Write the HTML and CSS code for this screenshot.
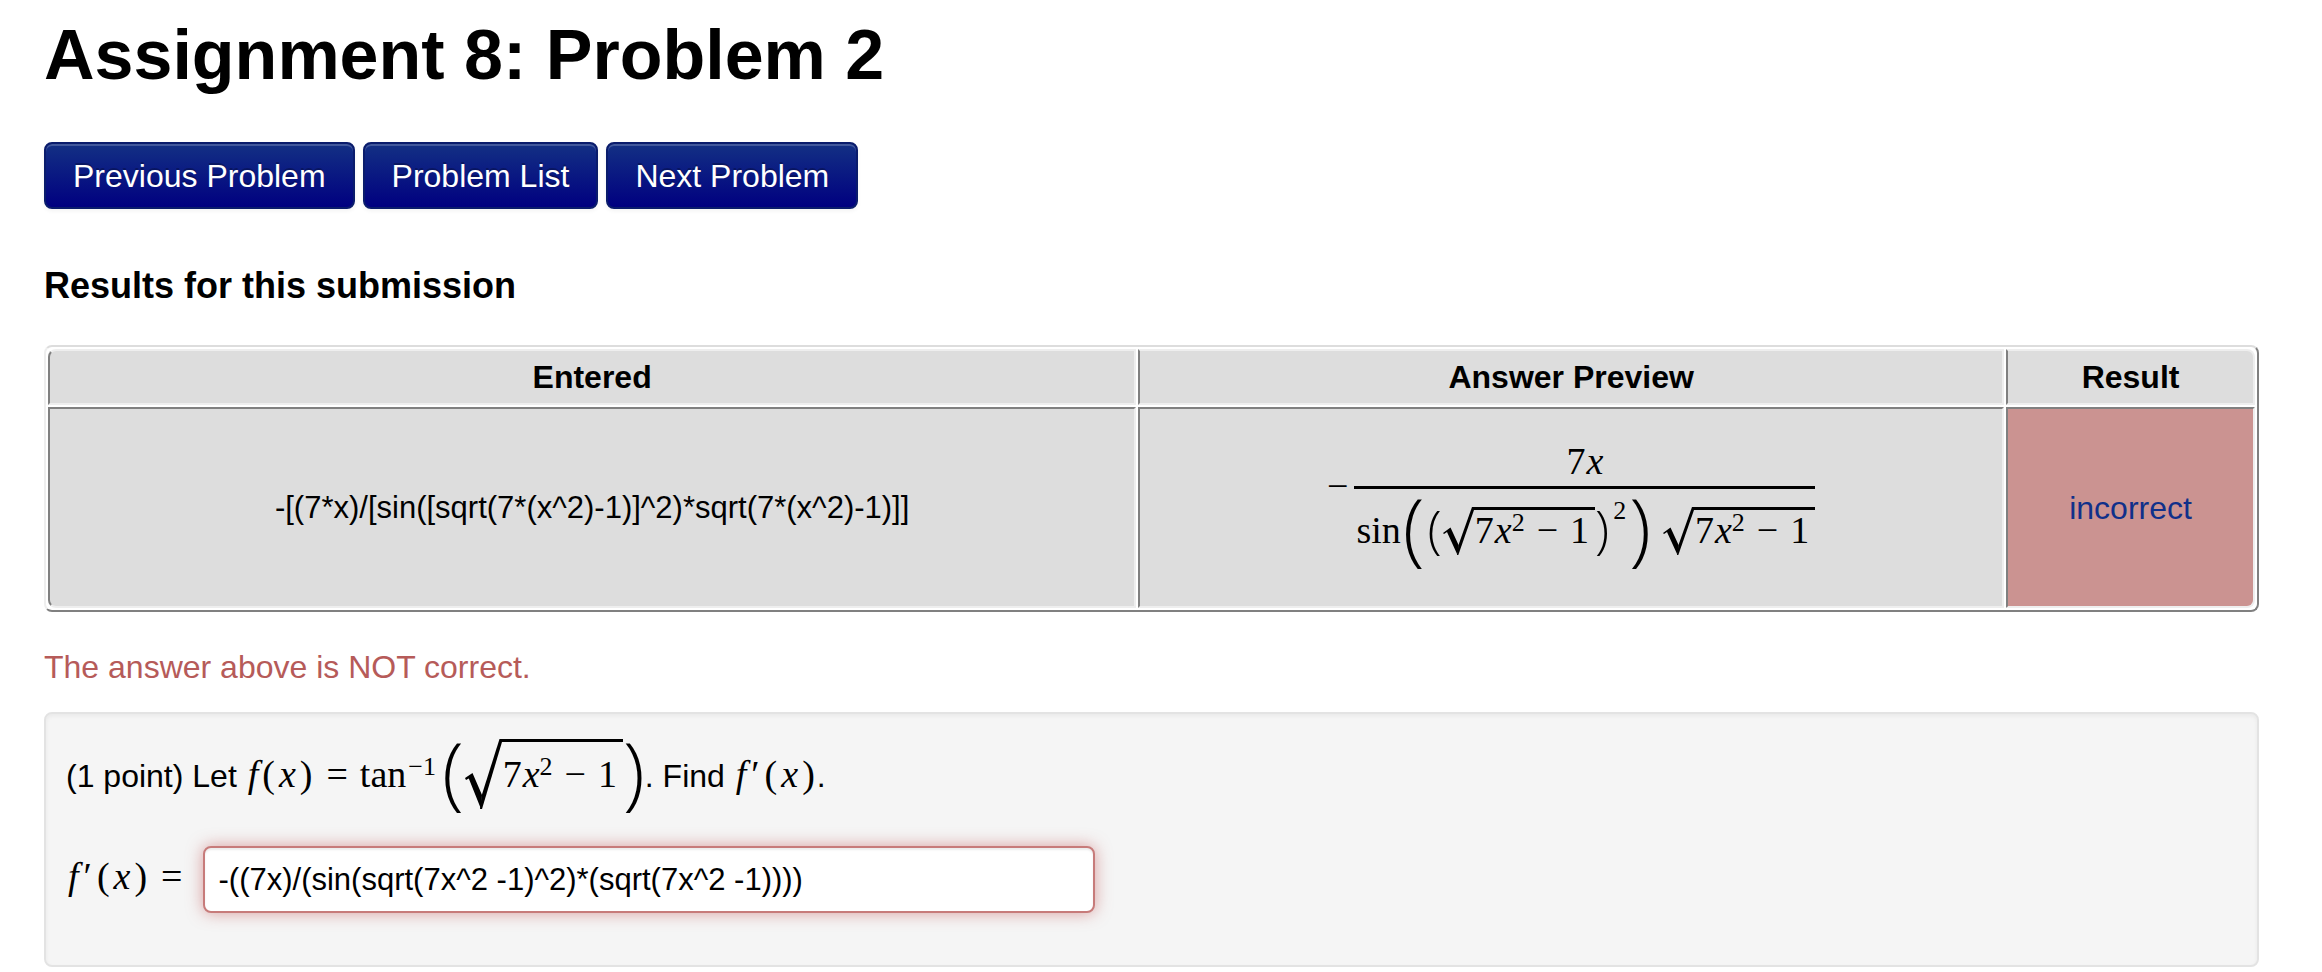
FILE: index.html
```html
<!DOCTYPE html>
<html lang="en">
<head>
<meta charset="utf-8">
<meta name="viewport" content="width=device-width, initial-scale=1">
<title>Assignment 8: Problem 2</title>
<link rel="stylesheet" href="styles.css">
</head>
<body>
<main class="page">
  <h1 class="title">Assignment 8: Problem 2</h1>
  <nav class="nav">
    <a class="btn" href="#previous">Previous Problem</a>
    <a class="btn" href="#list">Problem List</a>
    <a class="btn" href="#next">Next Problem</a>
  </nav>

  <h3 class="subtitle">Results for this submission</h3>
  <table class="results">
    <colgroup><col class="col-entered"><col class="col-preview"><col class="col-result"></colgroup>
    <thead>
      <tr><th scope="col">Entered</th><th scope="col">Answer Preview</th><th scope="col">Result</th></tr>
    </thead>
    <tbody>
      <tr>
        <td class="entered">-[(7*x)/[sin([sqrt(7*(x^2)-1)]^2)*sqrt(7*(x^2)-1)]]</td>
        <td>
          <span class="math equation">
            <span class="lead-minus">−</span>
            <span class="frac">
              <span class="num">7<i class="var">x</i></span>
              <span class="den"><span class="fn">sin</span><span class="paren paren-lg open">(</span><span class="paren paren-md open">(</span><span class="root"><svg class="radical" viewBox="0 0 31 48" aria-hidden="true"><path d="M0 26L7.500 20.500L15.800 38.500L14.500 48L4 25L1 27Z"/><path d="M14 48L15.500 38L29 0H31V3L15.300 48Z"/></svg><span class="radicand">7<i class="var">x</i><span class="sup">2</span><span class="op">−</span>1</span></span><span class="paren paren-md">)</span><span class="sup sup-high">2</span><span class="paren paren-lg close">)</span><span class="root root-spaced"><svg class="radical" viewBox="0 0 31 48" aria-hidden="true"><path d="M0 26L7.500 20.500L15.800 38.500L14.500 48L4 25L1 27Z"/><path d="M14 48L15.500 38L29 0H31V3L15.300 48Z"/></svg><span class="radicand">7<i class="var">x</i><span class="sup">2</span><span class="op">−</span>1</span></span></span>
            </span>
          </span>
        </td>
        <td class="wrong"><a class="result-link" href="#answer">incorrect</a></td>
      </tr>
    </tbody>
  </table>

  <p class="message">The answer above is NOT correct.</p>

  <section class="problem">
    <p class="statement">(1 point) Let <span class="math"><i class="func">f</i><span class="arg">(<i class="var">x</i>)</span><span class="op">=</span><span class="fn">tan</span><span class="sup sup-inverse">−1</span><span class="paren paren-lg open">(</span><span class="root root-tall"><svg class="radical" viewBox="0 0 37 70" aria-hidden="true"><path d="M0 39L7.500 34L17 56L16 70L3.800 39.500L1 41Z"/><path d="M15 70L16.800 56L34.500 0H37V3L17 70Z"/></svg><span class="radicand">7<i class="var">x</i><span class="sup">2</span><span class="op">−</span>1</span></span><span class="paren paren-lg">)</span></span>. Find <span class="math"><i class="func">f</i><span class="prime">′</span><span class="arg">(<i class="var">x</i>)</span></span>.</p>
    <div class="answer-row">
      <label class="math answer-label" for="answer"><i class="func">f</i><span class="prime">′</span><span class="arg">(<i class="var">x</i>)</span><span class="op">=</span></label>
      <input class="answer" id="answer" type="text" value="-((7x)/(sin(sqrt(7x^2 -1)^2)*(sqrt(7x^2 -1))))">
    </div>
  </section>
</main>
</body>
</html>
```
FILE: styles.css
```css
* { box-sizing: border-box; }

body {
  margin: 0;
  background: #fff;
  color: #000;
  font: 32px/40px "Liberation Sans", Arial, sans-serif;
}

.page { padding: 15px 63px 4px 44px; }

.title {
  margin: 0 0 47px;
  font-size: 70px;
  line-height: 80px;
}

.nav { display: flex; gap: 8px; }

.btn {
  padding: 12px 27px 11px;
  border: 2px solid #0a1c6c;
  border-radius: 8px;
  background: linear-gradient(#133084, #000080);
  box-shadow: inset 0 2px 0 rgba(255, 255, 255, 0.2), 0 2px 4px rgba(0, 0, 0, 0.05);
  color: #fff;
  text-decoration: none;
  text-shadow: 0 -2px 0 rgba(0, 0, 0, 0.25);
}

.subtitle {
  margin: 57px 0 39px;
  font-size: 36px;
  line-height: 40px;
}

/* Results table */
.results {
  width: 100%;
  border: 2px solid;
  border-color: #ddd #808080 #808080 #eee;
  border-radius: 8px;
  border-spacing: 2px;
  text-align: center;
}
.col-entered { width: 49.4%; }
.col-preview { width: 39.3%; }
.col-result { width: 11.3%; }

.results th,
.results td {
  border: 2px solid;
  border-color: #808080 #eee #eee #808080;
  background: #ddd;
  vertical-align: middle;
}
.results th { padding: 6px; border-top-color: #eee; }
.results td { padding: 27px 6px; }
.results th:first-child { border-top-left-radius: 8px; }
.results th:last-child { border-top-right-radius: 8px; }
.results td:first-child { border-bottom-left-radius: 8px; }
.results td:last-child { border-bottom-right-radius: 8px; }
.results .entered { font-size: 31px; }
.results .wrong { background: #cb9391; }
.result-link { color: #10308a; text-decoration: none; }

/* Mathematics */
.math {
  font-family: "Liberation Serif", "Times New Roman", serif;
  font-size: 38px;
  white-space: nowrap;
}
.var { margin-left: 1px; }
.func { margin: 0 2px; }
.op { margin: 0 12px; }
.arg { margin: 0 2px; }
.arg .var { margin: 0 4px; }
.prime { margin: 0 3px; }
.sup { font-size: 26px; line-height: 0; vertical-align: 12px; }
.sup-high { margin-left: 4px; vertical-align: 24px; }
.sup-inverse { margin: 0 4px 0 2px; }

.paren { font-family: "Open Sans", sans-serif; font-weight: 300; line-height: 0; }
.paren-lg { font-size: 80px; vertical-align: -13px; }
.paren-md { font-size: 52px; vertical-align: -5px; }
.open { margin: 0 1px 0 2px; }
.close { margin-left: 3px; }

.equation { display: flex; justify-content: center; align-items: flex-start; gap: 6px; }
.lead-minus { line-height: 100px; }
.frac { display: flex; flex-direction: column; }
.num { line-height: 50px; }
.den {
  padding: 0 0 8px 2px;
  border-top: 3px solid #000;
  line-height: 82px;
}

.root { display: inline-flex; align-items: flex-start; }
.root-spaced { margin-left: 12px; }
.radical { flex: none; width: 31px; height: 48px; }
.radicand {
  align-self: baseline;
  padding: 1px 6px 0 1px;
  border-top: 3px solid #000;
  line-height: 38px;
}
.root-tall .radical { width: 37px; height: 70px; }
.root-tall .radicand { padding-top: 13px; }

/* Feedback and problem panel */
.message { margin: 35px 0 25px; color: #b65b59; }

.problem {
  padding: 25px 20px 52px;
  border: 2px solid #e3e3e3;
  border-radius: 8px;
  background: #f5f5f5;
  box-shadow: inset 0 2px 4px rgba(0, 0, 0, 0.05);
}
.statement { margin: 0 0 37px; }

.answer-row { display: flex; align-items: center; gap: 8px; }
.answer-label { padding-bottom: 8px; }
.answer {
  width: 892px;
  max-width: 100%;
  height: 67px;
  padding: 8px 14px;
  border: 2px solid #c77b7a;
  border-radius: 8px;
  background: #fff;
  box-shadow: inset 0 2px 2px rgba(0, 0, 0, 0.075), 0 0 16px rgba(190, 70, 70, 0.5);
  color: #000;
  font: inherit;
  font-size: 31px;
}
```
